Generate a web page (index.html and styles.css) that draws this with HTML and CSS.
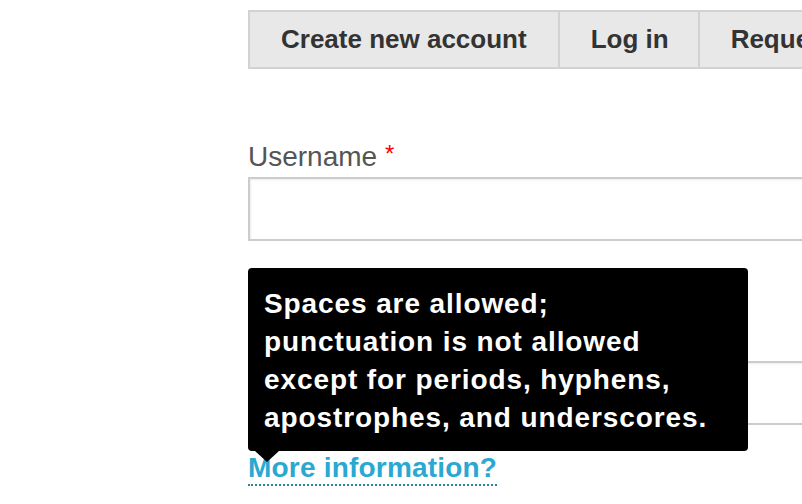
FILE: index.html
```html
<!DOCTYPE html>
<html lang="en">
<head>
<meta charset="utf-8">
<title>User account</title>
<link rel="stylesheet" href="styles.css">
</head>
<body>
<div class="page">
  <ul class="tabs">
    <li class="tab">Create new account</li>
    <li class="tab tab-login">Log in</li>
    <li class="tab">Request new password</li>
  </ul>
  <form class="form">
    <div class="field field-user">
      <label class="label">Username <span class="req">*</span></label>
      <div class="input"></div>
    </div>
    <div class="field field-pass">
      <label class="label">Password <span class="req">*</span></label>
      <div class="input"></div>
    </div>
    <div class="help">
      <a class="more">More information?</a>
      <div class="tooltip">Spaces are allowed;<br>punctuation is not allowed<br>except for periods, hyphens,<br>apostrophes, and underscores.</div>
    </div>
  </form>
</div>
</body>
</html>
```
FILE: styles.css
```css
html, body {
  margin: 0;
  padding: 0;
  background: #fff;
  overflow: hidden;
}
body {
  font-family: "Liberation Sans", Arial, Helvetica, sans-serif;
  width: 802px;
  height: 504px;
}
.page {
  margin-left: 248px;
  width: 800px;
  padding-top: 10px;
}
.tabs {
  list-style: none;
  margin: 0;
  padding: 0;
  display: flex;
  background: #e8e8e8;
  border: 2px solid #d2d2d2;
  border-right: none;
}
.tab {
  font-size: 26px;
  font-weight: bold;
  color: #333;
  line-height: 30px;
  padding: 12px 31px 13px 31px;
  border-right: 2px solid #d2d2d2;
  white-space: nowrap;
}
.tab-login {
  padding-left: 31px;
  padding-right: 29px;
}
.form {
  display: flex;
  flex-direction: column;
}
.field-user {
  margin-top: 72px;
}
.field-pass {
  margin-top: 84px;
}
.label {
  display: block;
  font-size: 28px;
  line-height: 32px;
  color: #555;
  margin-bottom: 3px;
}
.req {
  color: #f00;
  font-size: 24px;
  position: relative;
  top: -4px;
}
.input {
  height: 60px;
  border: 2px solid #cccccc;
  box-shadow: inset 1px 1px 2px rgba(0,0,0,0.08);
  background: #fff;
}
.help {
  position: relative;
  margin-top: 27px;
  align-self: flex-start;
}
.more {
  display: inline-block;
  font-size: 28px;
  font-weight: bold;
  line-height: 32px;
  color: #2aa8d2;
  border-bottom: 2px dotted #2b8596;
  letter-spacing: 0.2px;
  cursor: pointer;
}
.tooltip {
  position: absolute;
  left: 0;
  bottom: calc(100% + 1px);
  width: 468px;
  padding: 17px 16px 14px 16px;
  background: #000;
  color: #fff;
  border-radius: 4px;
  font-size: 28px;
  font-weight: bold;
  line-height: 38px;
  letter-spacing: 0.9px;
  white-space: nowrap;
}
.tooltip::after {
  content: "";
  position: absolute;
  left: 7px;
  top: 100%;
  border-left: 12px solid transparent;
  border-right: 12px solid transparent;
  border-top: 11px solid #000;
}
```
